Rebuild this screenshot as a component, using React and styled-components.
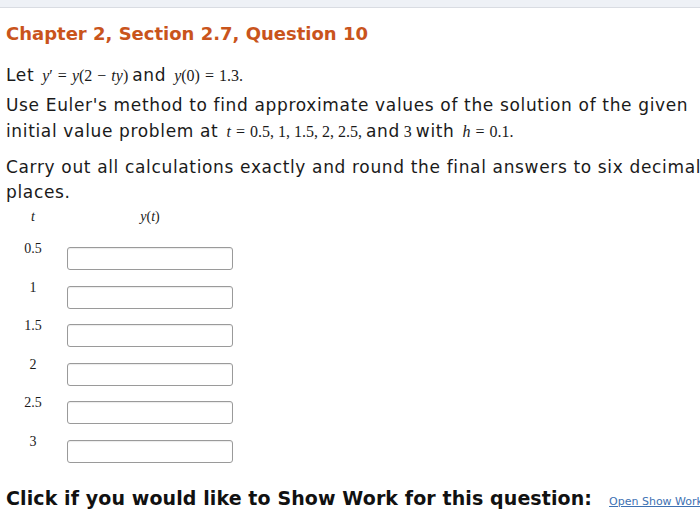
import React from "react";
import styled, { createGlobalStyle } from "styled-components";

const GlobalStyle = createGlobalStyle`
  html, body {
    margin: 0;
    padding: 0;
    background: #ffffff;
    overflow: hidden;
  }
  body {
    font-family: "DejaVu Sans", Verdana, sans-serif;
    color: #1a1a1a;
  }
`;

const Page = styled.div`
  width: 700px;
  height: 530px;
  overflow: hidden;
`;

const TopStrip = styled.div`
  height: 7px;
  background: #eef1f6;
  border-bottom: 1px solid #d9dce2;
`;

const Content = styled.div`
  padding: 15px 0 0 6px;
  white-space: nowrap;
`;

const Title = styled.h2`
  margin: 0;
  font-size: 18px;
  line-height: 22px;
  font-weight: bold;
  color: #c9541c;
`;

const Para = styled.p`
  margin: ${(p) => p.margin || "0"};
  font-size: 17px;
  letter-spacing: 0.65px;
  line-height: ${(p) => p.lh || "26px"};
  white-space: nowrap;
`;

const Math = styled.span`
  font-family: "Liberation Serif", "Times New Roman", serif;
  font-size: 16px;
  letter-spacing: 0;
  margin: 0 4px;
`;

const V = styled.i`
  font-style: italic;
`;

const Op = styled.span`
  display: inline-block;
  margin: 0 5px;
`;

const Table = styled.div`
  margin-top: 4px;
  display: grid;
  grid-template-columns: 54px 166px;
  column-gap: 7px;
  font-family: "Liberation Serif", "Times New Roman", serif;
  font-size: 14px;
`;

const HeadCell = styled.div`
  text-align: center;
  height: 30px;
  line-height: 16px;
`;

const Label = styled.div`
  text-align: center;
  height: 38.5px;
  line-height: 20px;
`;

const InputCell = styled.div`
  height: 38.5px;
  padding-top: 8px;
  box-sizing: border-box;
`;

const Field = styled.input`
  display: block;
  width: 166px;
  height: 23px;
  box-sizing: border-box;
  border: 1px solid #9a9a9a;
  border-radius: 3px;
  background: #fff;
  box-shadow: inset 0 1px 1px rgba(0, 0, 0, 0.08);
  outline: none;
`;

const Footer = styled.div`
  margin-top: 17px;
  display: flex;
  align-items: baseline;
  gap: 17px;
`;

const FooterText = styled.span`
  font-size: 19px;
  letter-spacing: 0.1px;
  font-weight: bold;
  color: #111;
`;

const Link = styled.a`
  font-size: 11px;
  color: #3d71b3;
  text-decoration: underline;
`;

const rows = ["0.5", "1", "1.5", "2", "2.5", "3"];

export default function App() {
  return (
    <Page>
      <GlobalStyle />
      <TopStrip />
      <Content>
        <Title>Chapter 2, Section 2.7, Question 10</Title>
        <Para margin="17px 0 0">
          Let
          <Math>
            {" "}<V>y</V>′<Op>=</Op><V>y</V>(2<Op>−</Op><V>ty</V>)
          </Math>
          and
          <Math>
            {" "}<V>y</V>(0)<Op>=</Op>1.3.
          </Math>
        </Para>
        <Para margin="3px 0 0">
          Use Euler's method to find approximate values of the solution of the given
          <br />
          initial value problem at
          <Math>
            {" "}<V>t</V><Op>=</Op>0.5, 1, 1.5, 2, 2.5,
          </Math>
          and
          <Math>3</Math>
          with
          <Math>
            {" "}<V>h</V><Op>=</Op>0.1.
          </Math>
        </Para>
        <Para margin="10px 0 0" lh="25px">
          Carry out all calculations exactly and round the final answers to six decimal
          <br />
          places.
        </Para>
        <Table>
          <HeadCell>
            <V>t</V>
          </HeadCell>
          <HeadCell>
            <V>y</V>(<V>t</V>)
          </HeadCell>
          {rows.map((r) => (
            <React.Fragment key={r}>
              <Label>{r}</Label>
              <InputCell>
                <Field type="text" />
              </InputCell>
            </React.Fragment>
          ))}
        </Table>
        <Footer>
          <FooterText>Click if you would like to Show Work for this question:</FooterText>
          <Link href="#">Open Show Work</Link>
        </Footer>
      </Content>
    </Page>
  );
}
